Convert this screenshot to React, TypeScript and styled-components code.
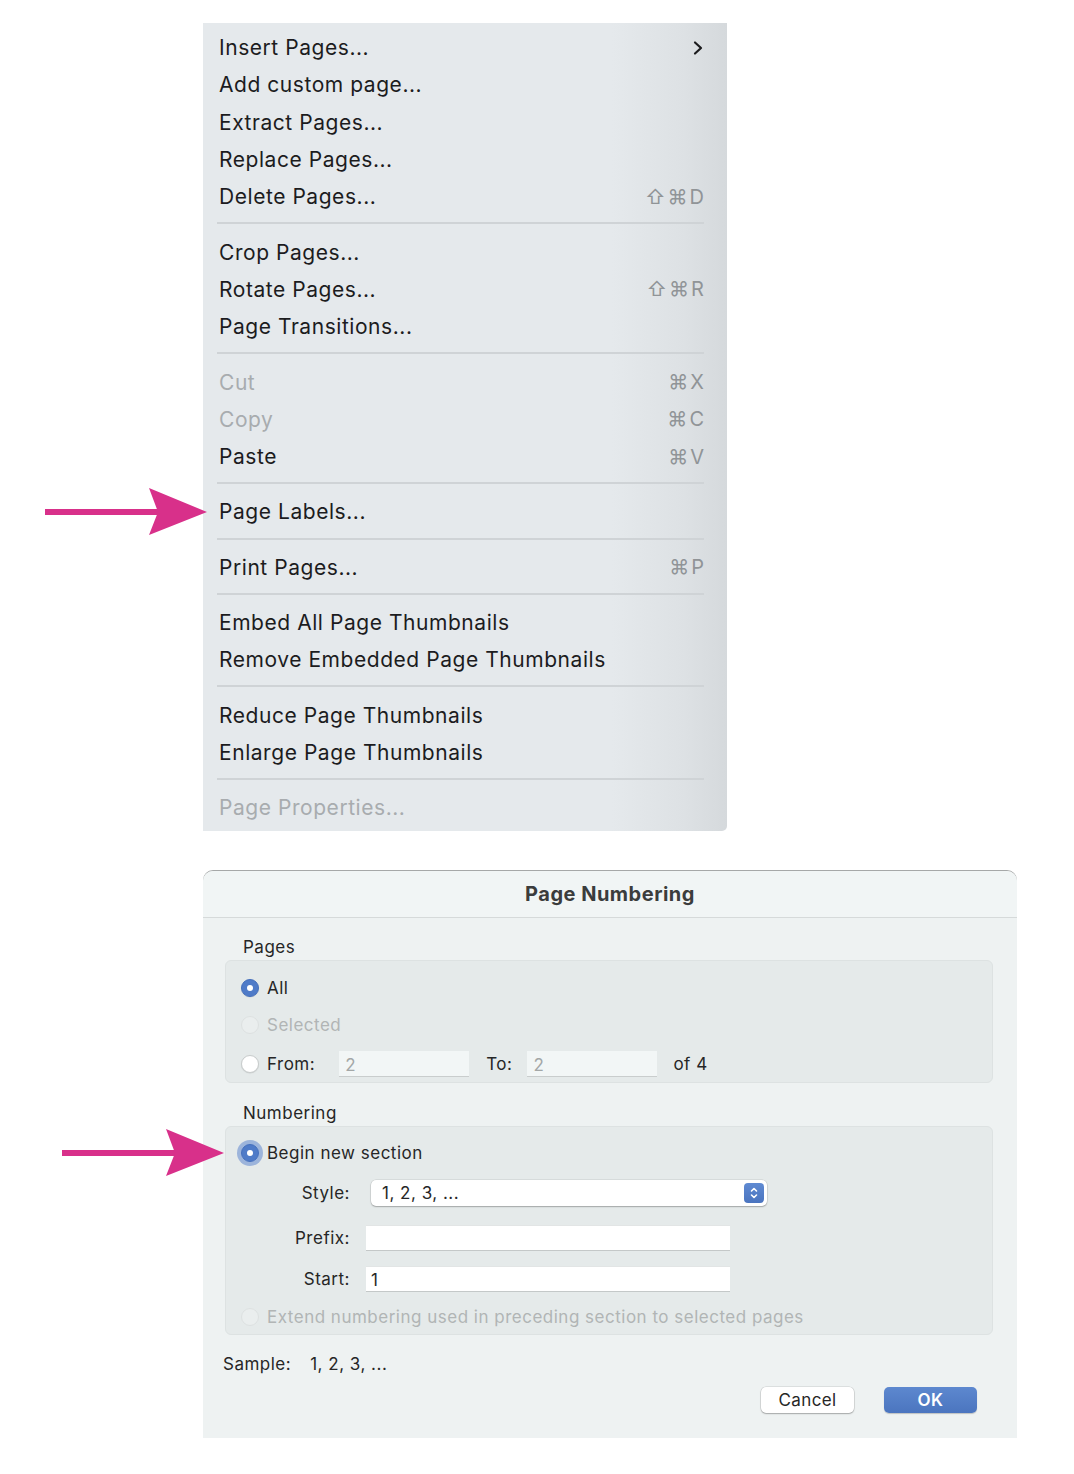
import React from "react";
import styled, { createGlobalStyle, css } from "styled-components";

const Global = createGlobalStyle`
  html, body { margin: 0; padding: 0; background: #ffffff; }
  body { font-family: Inter, "Noto Sans", "Liberation Sans", sans-serif; -webkit-font-smoothing: antialiased; }
  * { box-sizing: border-box; }
`;

const Page = styled.div`
  position: relative;
  width: 1074px;
  height: 1474px;
  padding: 23px 0 0 203px;
  display: flex;
  flex-direction: column;
  gap: 40px;
`;

/* ---------- Menu ---------- */
const Menu = styled.div`
  width: 524px;
  padding: 6px 0 5px;
  background: linear-gradient(to right, #e5e9ec 0%, #e5e9ec 78%, #dde1e4 92%, #d5d9dc 100%);
  border-bottom-right-radius: 5px;
`;

const Item = styled.div<{ $disabled?: boolean }>`
  height: 37.3px;
  display: flex;
  align-items: center;
  justify-content: space-between;
  padding: 0 23px 0 16px;
  font-size: 21px;
  letter-spacing: 0.55px;
  color: ${(p) => (p.$disabled ? "#a8acaf" : "#1c1c1e")};
`;

const Shortcut = styled.span`
  color: #909497;
  font-size: 20px;
  letter-spacing: 2px;
  margin-right: -2px;
  font-family: Inter, "DejaVu Sans", sans-serif;
`;

const Sep = styled.div`
  height: 2px;
  background: #cfd3d6;
  margin: 7px 23px 9px 14px;
`;

const Chevron = () => (
  <svg width="12" height="16" viewBox="0 0 12 16">
    <path d="M3 2.5 L9 8 L3 13.5" fill="none" stroke="#1c1c1e" strokeWidth="2.2" strokeLinecap="round" strokeLinejoin="round" />
  </svg>
);

/* ---------- Arrows ---------- */
const ArrowBox = styled.svg<{ $x: number; $y: number }>`
  position: absolute;
  left: ${(p) => p.$x}px;
  top: ${(p) => p.$y}px;
`;

const Arrow = ({ x, y }: { x: number; y: number }) => (
  <ArrowBox $x={x} $y={y} width="164" height="50" viewBox="0 0 164 50">
    <rect x="0" y="21" width="118" height="6" fill="#d8308a" />
    <path d="M104 0 L162 24 L104 47 L113 24 Z" fill="#d8308a" />
  </ArrowBox>
);

/* ---------- Dialog ---------- */
const Dialog = styled.div`
  width: 814px;
  height: 567px;
  background: #eef2f2;
  border-radius: 10px 10px 0 0;
  box-shadow: 0 -1px 0 #a6a8a8;
  display: flex;
  flex-direction: column;
`;

const TitleBar = styled.div`
  height: 47px;
  flex: none;
  display: flex;
  align-items: center;
  justify-content: center;
  background: #f1f5f5;
  border-bottom: 1px solid #d6dada;
  border-radius: 10px 10px 0 0;
  font-size: 20px;
  letter-spacing: 0.5px;
  font-weight: 700;
  color: #3b3c3c;
`;

const Body = styled.div`
  padding: 0 24px 0 22px;
  display: flex;
  flex-direction: column;
`;

const SectionLabel = styled.div<{ $top: number }>`
  margin: ${(p) => p.$top}px 0 3px 18px;
  height: 20px;
  line-height: 20px;
  font-size: 17px;
  letter-spacing: 0.5px;
  color: #262626;
`;

const Group = styled.div<{ $pb: number }>`
  background: #e5eaea;
  border: 1px solid #dde2e2;
  border-radius: 6px;
  padding: 7px 16px ${(p) => p.$pb}px 15px;
  display: flex;
  flex-direction: column;
`;

const Row = styled.div<{ $h: number; $mt?: number }>`
  height: ${(p) => p.$h}px;
  margin-top: ${(p) => p.$mt || 0}px;
  display: flex;
  align-items: center;
`;

const Text = styled.span<{ $disabled?: boolean; $ml?: number }>`
  font-size: 17px;
  letter-spacing: 0.5px;
  margin-left: ${(p) => p.$ml || 0}px;
  color: ${(p) => (p.$disabled ? "#b1b5b5" : "#262626")};
  white-space: nowrap;
`;

const Radio = styled.span<{ $checked?: boolean; $disabled?: boolean; $focus?: boolean }>`
  width: 18px;
  height: 18px;
  border-radius: 50%;
  flex: none;
  position: relative;
  margin-right: 8px;
  background: #ffffff;
  border: 1px solid #c8cccc;
  box-shadow: 0 0.5px 1px rgba(0, 0, 0, 0.12);
  ${(p) =>
    p.$disabled &&
    css`
      background: #eaeeee;
      border-color: #dde1e1;
      box-shadow: none;
    `}
  ${(p) =>
    p.$checked &&
    css`
      background: #4f7bc8;
      border-color: #4570bd;
      &::after {
        content: "";
        position: absolute;
        left: 5px;
        top: 5px;
        width: 6px;
        height: 6px;
        border-radius: 50%;
        background: #ffffff;
      }
    `}
  ${(p) =>
    p.$focus &&
    css`
      box-shadow: 0 0 0 4px rgba(96, 134, 206, 0.55);
    `}
`;

const SmallField = styled.div<{ $ml: number }>`
  width: 130px;
  height: 26px;
  margin-left: ${(p) => p.$ml}px;
  background: #f2f6f6;
  border-bottom: 1px solid #c9cdcd;
  font-size: 17px;
  color: #a3a7a7;
  padding: 4px 0 0 6px;
`;

const FormLabel = styled.span`
  width: 109px;
  text-align: right;
  font-size: 17px;
  letter-spacing: 0.5px;
  color: #262626;
`;

const Select = styled.div`
  width: 396px;
  height: 26px;
  margin-left: 21px;
  background: #ffffff;
  border-radius: 5px;
  box-shadow: 0 0 0 0.5px rgba(0, 0, 0, 0.12), 0 1px 1.5px rgba(0, 0, 0, 0.25);
  display: flex;
  align-items: center;
  justify-content: space-between;
  padding: 0 3px 0 11px;
  font-size: 17px;
  letter-spacing: 0.5px;
  color: #262626;
`;

const Stepper = styled.span`
  width: 20px;
  height: 20px;
  border-radius: 4px;
  background: linear-gradient(#5f8ad2, #4a74bf);
  display: flex;
  align-items: center;
  justify-content: center;
`;

const TextField = styled.div`
  width: 364px;
  height: 26px;
  margin-left: 16px;
  background: #ffffff;
  border-top: 1px solid #e2e5e5;
  border-bottom: 1px solid #c4c8c8;
  font-size: 17px;
  color: #262626;
  padding: 3px 0 0 5px;
`;

const SampleRow = styled.div`
  margin: 19px 0 0 -2px;
  height: 20px;
  display: flex;
  align-items: center;
  gap: 19px;
  font-size: 17px;
  letter-spacing: 0.5px;
  color: #262626;
`;

const Buttons = styled.div`
  margin: 13px 16px 0 0;
  display: flex;
  justify-content: flex-end;
  gap: 30px;
`;

const Button = styled.div<{ $primary?: boolean }>`
  width: 93px;
  height: 26px;
  border-radius: 5px;
  display: flex;
  align-items: center;
  justify-content: center;
  font-size: 17px;
  letter-spacing: 0.4px;
  ${(p) =>
    p.$primary
      ? css`
          background: linear-gradient(#5d88cf, #4b75bf);
          color: #ffffff;
          font-weight: 600;
          box-shadow: 0 1px 1px rgba(0, 0, 0, 0.2);
        `
      : css`
          background: #ffffff;
          color: #262626;
          box-shadow: 0 0 0 0.5px rgba(0, 0, 0, 0.15), 0 1px 1.5px rgba(0, 0, 0, 0.25);
        `}
`;

type MenuEntry = { label: string; shortcut?: string; disabled?: boolean; sub?: boolean } | "sep";

const menu: MenuEntry[] = [
  { label: "Insert Pages...", sub: true },
  { label: "Add custom page..." },
  { label: "Extract Pages..." },
  { label: "Replace Pages..." },
  { label: "Delete Pages...", shortcut: "⇧⌘D" },
  "sep",
  { label: "Crop Pages..." },
  { label: "Rotate Pages...", shortcut: "⇧⌘R" },
  { label: "Page Transitions..." },
  "sep",
  { label: "Cut", shortcut: "⌘X", disabled: true },
  { label: "Copy", shortcut: "⌘C", disabled: true },
  { label: "Paste", shortcut: "⌘V" },
  "sep",
  { label: "Page Labels..." },
  "sep",
  { label: "Print Pages...", shortcut: "⌘P" },
  "sep",
  { label: "Embed All Page Thumbnails" },
  { label: "Remove Embedded Page Thumbnails" },
  "sep",
  { label: "Reduce Page Thumbnails" },
  { label: "Enlarge Page Thumbnails" },
  "sep",
  { label: "Page Properties...", disabled: true },
];

export default function App() {
  return (
    <>
      <Global />
      <Page>
        <Menu>
          {menu.map((m, i) =>
            m === "sep" ? (
              <Sep key={i} />
            ) : (
              <Item key={i} $disabled={m.disabled}>
                <span>{m.label}</span>
                {m.sub && <Chevron />}
                {m.shortcut && <Shortcut>{m.shortcut}</Shortcut>}
              </Item>
            )
          )}
        </Menu>

        <Dialog>
          <TitleBar>Page Numbering</TitleBar>
          <Body>
            <SectionLabel $top={19}>Pages</SectionLabel>
            <Group $pb={0}>
              <Row $h={38} $mt={1}>
                <Radio $checked />
                <Text>All</Text>
              </Row>
              <Row $h={36}>
                <Radio $disabled />
                <Text $disabled>Selected</Text>
              </Row>
              <Row $h={36} $mt={3}>
                <Radio />
                <Text>From:</Text>
                <SmallField $ml={24}>2</SmallField>
                <Text $ml={17}>To:</Text>
                <SmallField $ml={15}>2</SmallField>
                <Text $ml={16}>of 4</Text>
              </Row>
            </Group>

            <SectionLabel $top={20}>Numbering</SectionLabel>
            <Group $pb={2}>
              <Row $h={37}>
                <Radio $checked $focus />
                <Text>Begin new section</Text>
              </Row>
              <Row $h={26} $mt={9}>
                <FormLabel>Style:</FormLabel>
                <Select>
                  <span>1, 2, 3, ...</span>
                  <Stepper>
                    <svg width="10" height="14" viewBox="0 0 10 14">
                      <path d="M2.5 5 L5 2.5 L7.5 5 M2.5 9 L5 11.5 L7.5 9" fill="none" stroke="#fff" strokeWidth="1.6" strokeLinecap="round" strokeLinejoin="round" />
                    </svg>
                  </Stepper>
                </Select>
              </Row>
              <Row $h={26} $mt={19}>
                <FormLabel>Prefix:</FormLabel>
                <TextField />
              </Row>
              <Row $h={26} $mt={15}>
                <FormLabel>Start:</FormLabel>
                <TextField>1</TextField>
              </Row>
              <Row $h={30} $mt={10}>
                <Radio $disabled />
                <Text $disabled>Extend numbering used in preceding section to selected pages</Text>
              </Row>
            </Group>

            <SampleRow>
              <span>Sample:</span>
              <span>1, 2, 3, ...</span>
            </SampleRow>
            <Buttons>
              <Button>Cancel</Button>
              <Button $primary>OK</Button>
            </Buttons>
          </Body>
        </Dialog>

        <Arrow x={45} y={488} />
        <Arrow x={62} y={1129} />
      </Page>
    </>
  );
}
